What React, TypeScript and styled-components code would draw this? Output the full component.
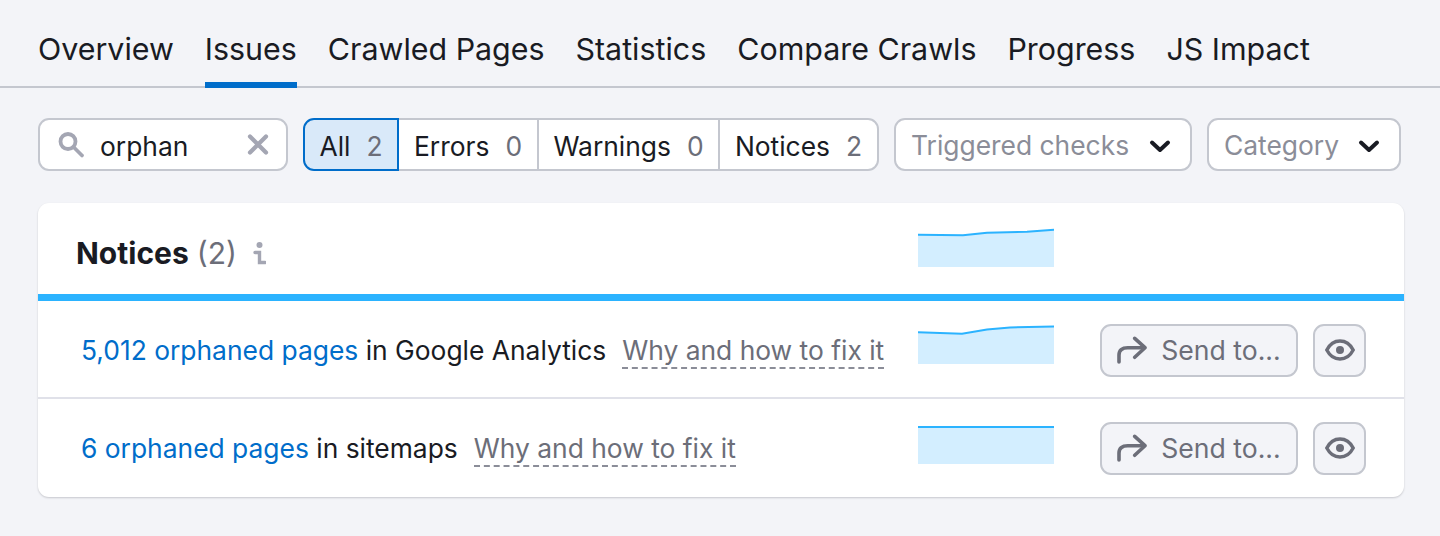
import styled, { createGlobalStyle } from 'styled-components';

const GlobalStyle = createGlobalStyle`
  html, body {
    margin: 0;
    padding: 0;
    background: #f3f4f8;
    font-family: Inter, "Liberation Sans", sans-serif;
    color: #191b23;
  }
`;

const Page = styled.div`
  width: 1440px;
  height: 536px;
  overflow: hidden;
`;

const Tabs = styled.nav`
  display: flex;
  gap: 31px;
  height: 86px;
  padding: 0 38px;
  border-bottom: 2px solid #c4c7cf;
`;

const Tab = styled.div<{ $active?: boolean }>`
  height: 88px;
  box-sizing: border-box;
  padding-top: 30px;
  font-size: 30.4px;
  line-height: 38px;
  border-bottom: 6px solid ${(p) => (p.$active ? '#006dca' : 'transparent')};
`;

const Filters = styled.div`
  display: flex;
  align-items: flex-start;
  margin: 30px 0 0 38px;
`;

const Field = styled.div`
  height: 53px;
  box-sizing: border-box;
  display: flex;
  align-items: center;
  background: #fff;
  border: 2px solid #c4c7cf;
  border-radius: 11px;
  font-size: 26.4px;
`;

const SearchBox = styled(Field)`
  width: 250px;
  padding: 0 17px;
  margin-right: 15px;

  & > span {
    flex: 1;
    margin-left: 15px;
    padding-top: 2px;
  }
`;

const Segments = styled.div`
  display: flex;
  width: 576px;
  height: 53px;
  margin-right: 15px;
`;

const Segment = styled.div<{ $active?: boolean; $width: number }>`
  width: ${(p) => p.$width}px;
  box-sizing: border-box;
  display: flex;
  align-items: center;
  justify-content: center;
  gap: 16px;
  padding-top: 2px;
  font-size: 26.4px;
  margin-left: -2px;
  background: ${(p) => (p.$active ? '#d9e9f9' : '#fff')};
  border: 2px solid ${(p) => (p.$active ? '#006dca' : '#c4c7cf')};
  position: relative;
  z-index: ${(p) => (p.$active ? 1 : 0)};

  &:first-child {
    margin-left: 0;
    border-radius: 11px 0 0 11px;
  }
  &:last-child {
    border-radius: 0 11px 11px 0;
  }
  & > em {
    font-style: normal;
    color: #6c6e79;
  }
`;

const Select = styled(Field)<{ $width: number; $gap?: number }>`
  width: ${(p) => p.$width}px;
  margin-right: ${(p) => p.$gap ?? 0}px;
  padding: 0 19px 0 15px;
  justify-content: space-between;
  color: #8b8d98;

  & > svg {
    margin-top: 2px;
  }
`;

const Card = styled.section`
  width: 1366px;
  margin: 32px 0 0 38px;
  background: #fff;
  border-radius: 11px;
  box-shadow: 0 1px 2px rgba(25, 27, 35, 0.2);
  overflow: hidden;
`;

const Head = styled.header`
  height: 98px;
  box-sizing: border-box;
  display: flex;
  align-items: center;
  padding: 9px 0 0 38px;
  border-bottom: 7px solid #2bb3ff;
  position: relative;
`;

const Title = styled.h2`
  margin: 0;
  font-size: 30px;
  font-weight: 700;
`;

const Count = styled.span`
  margin-left: 8px;
  font-size: 30px;
  color: #6c6e79;
`;

const InfoMark = styled.svg`
  margin-left: 15px;
`;

const Row = styled.div<{ $last?: boolean }>`
  height: 98px;
  display: flex;
  align-items: center;
  padding-left: 43px;
  font-size: 26.4px;
  box-shadow: ${(p) => (p.$last ? 'none' : 'inset 0 -2px 0 #e0e1e9')};
`;

const Description = styled.div`
  width: 837px;
  white-space: nowrap;
  & > a {
    color: #006dca;
    text-decoration: none;
  }
`;

const Hint = styled.span`
  margin-left: 16px;
  padding-bottom: 1px;
  color: #6c6e79;
  border-bottom: 2px dashed #8b8d98;
`;

const Spark = styled.svg<{ $lift?: number }>`
  display: block;
  flex: none;
  width: 136px;
  height: 40px;
  margin-top: ${(p) => -(p.$lift ?? 0)}px;
`;

const HeadSpark = styled(Spark)`
  position: absolute;
  left: 880px;
  top: 24px;
  margin: 0;
`;

const Actions = styled.div`
  display: flex;
  gap: 15px;
  margin-left: 46px;
`;

const Button = styled.div`
  height: 53px;
  box-sizing: border-box;
  display: flex;
  align-items: center;
  justify-content: center;
  background: #f3f4f8;
  border: 2px solid #c4c7cf;
  border-radius: 11px;
  color: #6c6e79;
  font-size: 26.6px;
`;

const SendButton = styled(Button)`
  width: 198px;
  gap: 14px;
`;

const EyeButton = styled(Button)`
  width: 53px;
`;

function SearchIcon() {
  return (
    <svg width="28" height="28" viewBox="0 0 28 28" fill="none" stroke="#a4a6b3" strokeWidth="3.8" strokeLinecap="round">
      <circle cx="11" cy="10.5" r="7.5" />
      <path d="M17 16.5l8 8" />
    </svg>
  );
}

function ClearIcon() {
  return (
    <svg width="22" height="22" viewBox="0 0 22 22" fill="none" stroke="#a4a6b3" strokeWidth="4.2" strokeLinecap="round">
      <path d="M3 2.5l16 16M19 2.5l-16 16" />
    </svg>
  );
}

function Chevron() {
  return (
    <svg width="22" height="14" viewBox="0 0 22 14" fill="none" stroke="#191b23" strokeWidth="4" strokeLinecap="round" strokeLinejoin="round">
      <path d="M3 3.5l8 7.5 8-7.5" />
    </svg>
  );
}

function InfoIcon() {
  return (
    <InfoMark width="14" height="24" viewBox="0 0 14 24" fill="none">
      <circle cx="7.500" cy="4" r="3" fill="#a4a6b3" />
      <path d="M3 11.500H7.500V21.500H13" stroke="#a4a6b3" strokeWidth="3.4" strokeLinecap="round" />
    </InfoMark>
  );
}

function SendIcon() {
  return (
    <svg width="30" height="28" viewBox="0 0 30 28" fill="none" stroke="#6c6e79" strokeWidth="3.6" strokeLinecap="round" strokeLinejoin="round">
      <path d="M2 26V19Q2 11.700 10.700 11.700H27" />
      <path d="M17.700 2.300L28 11.700L17.700 21.300" />
    </svg>
  );
}

function EyeIcon() {
  return (
    <svg width="30" height="22" viewBox="0 0 30 22" fill="none">
      <path d="M1.800 11C5 4.800 9.500 2 15 2s10 2.800 13.200 9C25 17.200 20.500 20 15 20S5 17.200 1.800 11z" stroke="#6c6e79" strokeWidth="3.4" />
      <circle cx="15" cy="11" r="4" fill="#6c6e79" />
    </svg>
  );
}

function Sparkline({ line, lift, as: Comp = Spark }: { line: string; lift?: number; as?: typeof Spark }) {
  return (
    <Comp viewBox="0 0 136 40" preserveAspectRatio="none" $lift={lift}>
      <path d={`${line} V40 H0 Z`} fill="#d3eeff" />
      <path d={line} fill="none" stroke="#2bb3ff" strokeWidth="2" />
    </Comp>
  );
}

const tabs = ['Overview', 'Issues', 'Crawled Pages', 'Statistics', 'Compare Crawls', 'Progress', 'JS Impact'];

const segments = [
  { label: 'All', count: 2, width: 96, active: true },
  { label: 'Errors', count: 0, width: 142 },
  { label: 'Warnings', count: 0, width: 183 },
  { label: 'Notices', count: 2, width: 161 },
];

const rows = [
  {
    link: '5,012 orphaned pages',
    rest: ' in Google Analytics',
    line: 'M0 8.200 L44 9.800 L69 5.500 L92 3.500 L136 2.500',
    lift: 13,
  },
  {
    link: '6 orphaned pages',
    rest: ' in sitemaps',
    line: 'M0 3 H136',
    lift: 9,
  },
];

export default function App() {
  return (
    <Page>
      <GlobalStyle />
      <Tabs>
        {tabs.map((t) => (
          <Tab key={t} $active={t === 'Issues'}>
            {t}
          </Tab>
        ))}
      </Tabs>
      <Filters>
        <SearchBox>
          <SearchIcon />
          <span>orphan</span>
          <ClearIcon />
        </SearchBox>
        <Segments>
          {segments.map((s) => (
            <Segment key={s.label} $active={s.active} $width={s.width}>
              {s.label}
              <em>{s.count}</em>
            </Segment>
          ))}
        </Segments>
        <Select $width={298} $gap={15}>
          Triggered checks
          <Chevron />
        </Select>
        <Select $width={194}>
          Category
          <Chevron />
        </Select>
      </Filters>
      <Card>
        <Head>
          <Title>Notices</Title>
          <Count>(2)</Count>
          <InfoIcon />
          <Sparkline as={HeadSpark} line="M0 7.700 L45 8.300 L69 5.700 L109 4.700 L136 2.700" />
        </Head>
        {rows.map((r, i) => (
          <Row key={r.link} $last={i === rows.length - 1}>
            <Description>
              <a href="#">{r.link}</a>
              {r.rest}
              <Hint>Why and how to fix it</Hint>
            </Description>
            <Sparkline line={r.line} lift={r.lift} />
            <Actions>
              <SendButton>
                <SendIcon />
                Send to...
              </SendButton>
              <EyeButton>
                <EyeIcon />
              </EyeButton>
            </Actions>
          </Row>
        ))}
      </Card>
    </Page>
  );
}
